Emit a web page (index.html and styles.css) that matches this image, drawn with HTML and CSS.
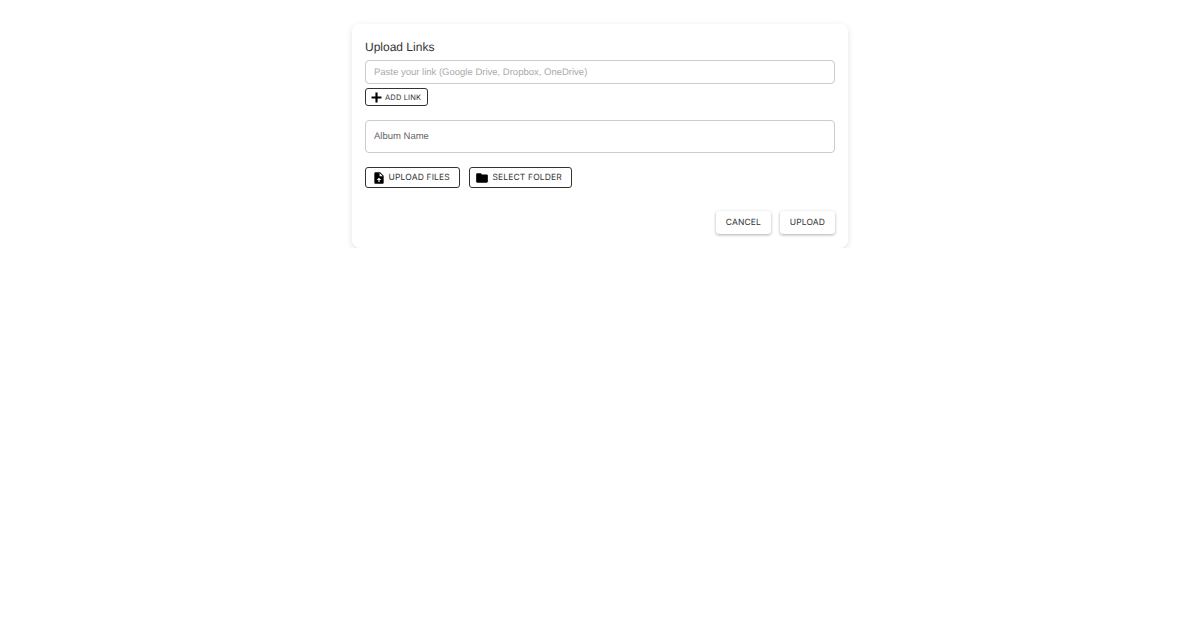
FILE: index.html
```html
<!DOCTYPE html>
<html lang="en">
<head>
    <meta charset="UTF-8">
    <title>Upload Links</title>
    <link rel="stylesheet" href="styles.css">
</head>
<body>
    <div class="dialog">
        <h2 class="dialog-title">Upload Links</h2>

        <div class="link-field">
            <input class="link-input" type="text" placeholder="Paste your link (Google Drive, Dropbox, OneDrive)">
        </div>
        <button class="outline-button small-button">
            <svg class="button-icon add-icon" viewBox="0 0 24 24"><path d="M19 13.500h-5.500V19h-3v-5.500H5v-3h5.500V5h3v5.500H19v3z"/></svg>
            Add Link
        </button>

        <div class="album-field">
            <input class="album-input" type="text" placeholder="Album Name">
        </div>

        <div class="picker-row">
            <button class="outline-button">
                <svg class="button-icon" viewBox="0 0 24 24"><path d="M14 2H6c-1.100 0-2 .9-2 2v16c0 1.100.9 2 2 2h12c1.100 0 2-.9 2-2V8l-6-6zm-1 7V3.500L18.500 9H13zm-1 2.500 4 4h-3V19h-2v-3.500H8l4-4z"/></svg>
                Upload Files
            </button>
            <button class="outline-button">
                <svg class="button-icon" viewBox="0 0 24 24"><path d="M10 4H4c-1.100 0-2 .9-2 2v12c0 1.100.9 2 2 2h16c1.100 0 2-.9 2-2V8c0-1.100-.9-2-2-2h-8l-2-2z"/></svg>
                Select Folder
            </button>
        </div>

        <div class="dialog-actions">
            <button class="raised-button">Cancel</button>
            <button class="raised-button">Upload</button>
        </div>
    </div>
</body>
</html>
```

FILE: styles.css
```css
body {
    margin: 0;
    background: #ffffff;
    color: #111111;
    font-family: "Liberation Sans", Arial, sans-serif;
}

/* unhinted glyphs, form controls don't inherit this */
body,
input,
button {
    text-rendering: geometricPrecision;
}

.dialog {
    box-sizing: border-box;
    width: 496px;
    height: 224px;
    margin: 24px auto 0;
    padding: 14px 13px;
    background: #ffffff;
    border-radius: 8px;
    box-shadow: 0 2px 6px rgba(0, 0, 0, 0.12);
}

.dialog-title {
    margin: 0 0 4px;
    padding: 1px 0;
    font-size: 12px;
    line-height: 16px;
    font-weight: 400;
    color: #333333;
}

.link-input,
.album-input {
    display: block;
    box-sizing: border-box;
    width: 100%;
    padding: 0 8px;
    background: #ffffff;
    border: 1px solid #cccccc;
    border-radius: 4px;
    font-family: "Liberation Sans", Arial, sans-serif;
    font-size: 9.500px;
    outline: none;
}

.link-input {
    height: 24px;
}

.link-input::placeholder {
    color: #aaaaaa;
    opacity: 1;
}

.album-field {
    margin-top: 14px;
}

.album-input {
    height: 33px;
}

.album-input::placeholder {
    color: #666666;
    opacity: 1;
}

.outline-button {
    display: flex;
    align-items: center;
    gap: 3px;
    box-sizing: border-box;
    height: 21px;
    padding: 0 9px 0 5.500px;
    background: #ffffff;
    border: 1px solid #333333;
    border-radius: 3px;
    color: #333333;
    font-family: Inter, sans-serif;
    font-size: 8.500px;
    letter-spacing: 0.15px;
    text-transform: uppercase;
}

.small-button {
    gap: 0.500px;
    height: 18px;
    margin-top: 4px;
    padding: 0 6px 0 1.500px;
    font-size: 7.500px;
}

.button-icon {
    width: 14px;
    height: 14px;
    fill: #000000;
}

.add-icon {
    width: 17px;
    height: 17px;
}

.picker-row {
    display: flex;
    gap: 9px;
    margin-top: 14px;
}

.dialog-actions {
    display: flex;
    justify-content: flex-end;
    gap: 9px;
    margin-top: 23px;
}

.raised-button {
    box-sizing: border-box;
    height: 23px;
    padding: 0 10px;
    background: #ffffff;
    border: none;
    border-radius: 3px;
    box-shadow: 0 1px 3px rgba(0, 0, 0, 0.32);
    color: #333333;
    font-family: Inter, sans-serif;
    font-size: 8.500px;
    letter-spacing: 0.1px;
    text-transform: uppercase;
}
```
